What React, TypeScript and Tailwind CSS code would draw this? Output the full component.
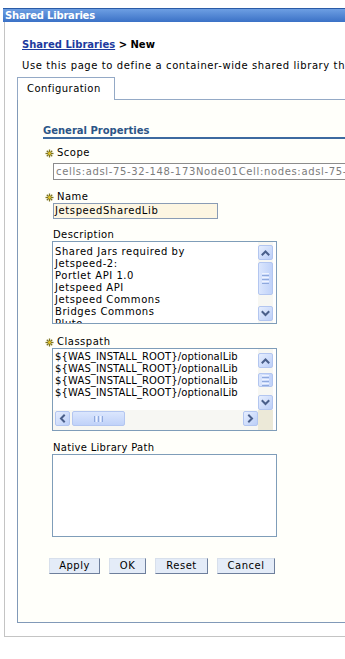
import React from "react";

type Dir = "up" | "down" | "left" | "right";

function ArrowBtn({ dir }: { dir: Dir }) {
  const paths: Record<Dir, string> = {
    up: "M3.5 8.5 L6.5 5.5 L9.5 8.5",
    down: "M3.5 5 L6.5 8 L9.5 5",
    left: "M8 3.5 L5 6.5 L8 9.5",
    right: "M5 3.5 L8 6.5 L5 9.5",
  };
  return (
    <div className="w-[15px] h-[15px] shrink-0 rounded-[2px] border border-[#b3c6f0] bg-[linear-gradient(135deg,#e6eefe,#bccff8)] flex items-center justify-center">
      <svg width="13" height="13" viewBox="0 0 13 13">
        <path d={paths[dir]} fill="none" stroke="#4a5f8a" strokeWidth="2" strokeLinecap="square" />
      </svg>
    </div>
  );
}

function VThumb({ h }: { h: number }) {
  return (
    <div
      className="w-[15px] shrink-0 rounded-[2px] border border-[#b3c6f0] bg-[linear-gradient(90deg,#dbe6fd,#c0d2f9)] flex flex-col items-center justify-center gap-[1px]"
      style={{ height: h }}
    >
      <div className="w-[7px] h-px bg-[#eef3fe]" />
      <div className="w-[7px] h-px bg-[#8fa9dd]" />
      <div className="w-[7px] h-px bg-[#eef3fe]" />
      <div className="w-[7px] h-px bg-[#8fa9dd]" />
      <div className="w-[7px] h-px bg-[#eef3fe]" />
      <div className="w-[7px] h-px bg-[#8fa9dd]" />
    </div>
  );
}

function HThumb({ w }: { w: number }) {
  return (
    <div
      className="h-[15px] shrink-0 rounded-[2px] border border-[#b3c6f0] bg-[linear-gradient(180deg,#dbe6fd,#c0d2f9)] flex items-center justify-center gap-[1px]"
      style={{ width: w }}
    >
      <div className="h-[6px] w-px bg-[#8fa9dd]" />
      <div className="h-[6px] w-px bg-[#eef3fe]" />
      <div className="h-[6px] w-px bg-[#8fa9dd]" />
      <div className="h-[6px] w-px bg-[#eef3fe]" />
      <div className="h-[6px] w-px bg-[#8fa9dd]" />
    </div>
  );
}

function Star() {
  return (
    <svg width="9" height="9" viewBox="0 0 9 9" className="shrink-0">
      <g stroke="#7d7420" strokeWidth="1.3">
        <line x1="4.5" y1="0.5" x2="4.5" y2="8.5" />
        <line x1="0.5" y1="4.5" x2="8.5" y2="4.5" />
        <line x1="1.8" y1="1.8" x2="7.2" y2="7.2" />
        <line x1="7.2" y1="1.8" x2="1.8" y2="7.2" />
      </g>
      <circle cx="4.5" cy="4.5" r="1.4" fill="#e6c62a" />
    </svg>
  );
}

function ReqLabel({ text, mt }: { text: string; mt: string }) {
  return (
    <div className={`flex items-center h-[12px] ${mt}`}>
      <div className="w-[12px] flex items-center">
        <Star />
      </div>
      <span className="leading-[12px] text-black tracking-[0.5px]">{text}</span>
    </div>
  );
}

function Button({ label, w }: { label: string; w: string }) {
  return (
    <div
      className={`${w} h-[16px] flex items-center justify-center border border-t-[#d8e0ec] border-l-[#d8e0ec] border-r-[#6e7f9c] border-b-[#6e7f9c] bg-[#e4ecf8] text-black leading-[12px] tracking-[0.5px]`}
    >
      {label}
    </div>
  );
}

export default function App() {
  const desc = [
    "Shared Jars required by",
    "Jetspeed-2:",
    "Portlet API 1.0",
    "Jetspeed API",
    "Jetspeed Commons",
    "Bridges Commons",
    "Pluto",
  ];
  const cp = Array.from({ length: 4 }, () => "${WAS_INSTALL_ROOT}/optionalLib");
  return (
    <div className="w-[345px] h-[659px] overflow-hidden bg-white font-['DejaVu_Sans',Verdana,sans-serif] text-[10px] text-black">
      <div className="h-[8px]" />
      {/* title bar */}
      <div className="ml-[3px] h-[14px] border-t border-[#2a5ba6] bg-[linear-gradient(180deg,#6d9fe3,#3b71c6)] flex items-center pl-[2px]">
        <span className="text-white font-bold leading-[12px] whitespace-nowrap tracking-[-0.2px]">Shared Libraries</span>
      </div>
      {/* outer frame */}
      <div className="ml-[4px] h-[615px] border-l border-b border-[#c4c4c4] flex flex-col">
        <div className="pl-[17px] mt-[17px] leading-[12px] whitespace-nowrap font-bold">
          <span className="text-[#1d3a9e] underline">Shared Libraries</span>
          <span> &gt; New</span>
        </div>
        <div className="pl-[17px] mt-[9px] leading-[12px] whitespace-nowrap tracking-[0.6px]">
          Use this page to define a container-wide shared library that can
        </div>
        {/* tab row */}
        <div className="ml-[12px] mt-[5px] flex h-[23px]">
          <div className="w-[98px] h-[23px] border-t border-l border-r border-[#94a9c6] bg-white flex items-center pl-[9px]">
            <span className="leading-[12px] tracking-[0.45px]">Configuration</span>
          </div>
          <div className="flex-1 border-b border-[#94a9c6]" />
        </div>
        {/* panel */}
        <div className="ml-[12px] h-[523px] border-l border-b border-[#8199b8] bg-[#fffffa] flex flex-col">
          <div className="ml-[25px] mt-[25px] h-[14px] border-b-2 border-[#3d6aa0] text-[#2c5587] font-bold leading-[12px] whitespace-nowrap">
            General Properties
          </div>
          <div className="pl-[27px] flex flex-col">
            <ReqLabel text="Scope" mt="mt-[8px]" />
            <div className="ml-[8px] mt-[4px] w-[320px] h-[17px] border border-[#8c8c8c] bg-white flex items-center pl-[2px]">
              <span className="text-[#7c7c7c] leading-[12px] whitespace-nowrap tracking-[0.65px]">
                cells:adsl-75-32-148-173Node01Cell:nodes:adsl-75-32-148
              </span>
            </div>
            <ReqLabel text="Name" mt="mt-[11px]" />
            <div className="ml-[8px] w-[165px] h-[16px] border border-[#8a9cb5] bg-[#fdf6e2] flex items-center pl-[1px]">
              <span className="leading-[12px] whitespace-nowrap tracking-[0.6px]">JetspeedSharedLib</span>
            </div>

            <div className="ml-[8px] mt-[10px] leading-[12px] h-[12px] tracking-[0.4px]">Description</div>
            <div className="ml-[7px] w-[225px] h-[83px] border border-[#7f9db9] bg-white flex">
              <div className="flex-1 overflow-hidden pl-[2px] pt-[4px] leading-[12px] whitespace-nowrap tracking-[0.55px]">
                {desc.map((l, i) => (
                  <div key={i}>{l}</div>
                ))}
              </div>
              <div className="w-[15px] mr-[3px] pt-[3px] pb-[2px] flex flex-col bg-[#f7f7f3]">
                <ArrowBtn dir="up" />
                <div className="h-[2px]" />
                <VThumb h={33} />
                <div className="flex-1" />
                <ArrowBtn dir="down" />
              </div>
            </div>

            <ReqLabel text="Classpath" mt="mt-[12px]" />
            <div className="ml-[7px] w-[225px] h-[83px] border border-[#7f9db9] bg-white flex flex-col">
              <div className="flex h-[61px]">
                <div className="flex-1 overflow-hidden pl-[2px] pt-[2px] leading-[12px] whitespace-nowrap tracking-[0.12px]">
                  {cp.map((l, i) => (
                    <div key={i}>{l}</div>
                  ))}
                </div>
                <div className="w-[15px] mr-[3px] pt-[4px] flex flex-col bg-[#f7f7f3]">
                  <ArrowBtn dir="up" />
                  <div className="h-[5px]" />
                  <VThumb h={14} />
                  <div className="flex-1" />
                  <ArrowBtn dir="down" />
                </div>
              </div>
              <div className="flex flex-1">
                <div className="flex-1 flex pl-[2px] pt-[1px] bg-[#f7f7f3]">
                  <ArrowBtn dir="left" />
                  <div className="w-[2px]" />
                  <HThumb w={53} />
                  <div className="flex-1" />
                  <ArrowBtn dir="right" />
                </div>
                <div className="w-[18px] pr-[3px] bg-white">
                  <div className="w-[15px] h-full bg-[#ece9d8]" />
                </div>
              </div>
            </div>

            <div className="ml-[8px] mt-[11px] leading-[12px] h-[12px] tracking-[0.3px]">Native Library Path</div>
            <div className="ml-[7px] w-[225px] h-[83px] border border-[#7f9db9] bg-white" />

            <div className="ml-[4px] mt-[21px] flex gap-[9px]">
              <Button label="Apply" w="w-[51px]" />
              <Button label="OK" w="w-[37px]" />
              <Button label="Reset" w="w-[53px]" />
              <Button label="Cancel" w="w-[58px]" />
            </div>
          </div>
        </div>
      </div>
    </div>
  );
}
